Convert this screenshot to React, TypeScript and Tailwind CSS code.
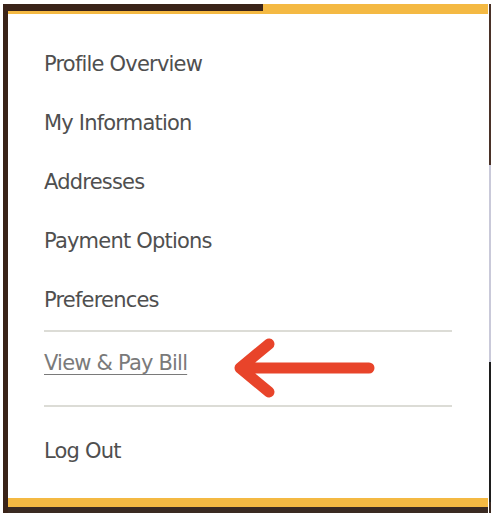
export default function App() {
  const items = ['Profile Overview', 'My Information', 'Addresses', 'Payment Options', 'Preferences'];

  const itemClass =
    "h-[59px] leading-[59px] text-[21px] tracking-[-0.8px] text-[#4f4f4f] font-['DejaVu_Sans',Verdana,sans-serif] whitespace-nowrap";

  return (
    <div className="w-[494px] h-[513px] bg-white overflow-hidden">
      <div className="flex h-[513px] pt-[4px] pl-[3px]">
        {/* left frame edge */}
        <div className="w-[5px] bg-[#3a2318]" />

        <div className="flex flex-col w-[480px]">
          {/* top progress bar */}
          <div className="relative h-[10px] bg-[#f4b943]">
            <div className="absolute left-[-5px] top-0 h-[7px] w-[260px] bg-[#3a2318]" />
          </div>

          <div className="h-[484px] bg-white px-[36px] pt-[21px]">
            {items.map((item) => (
              <div key={item} className={itemClass}>
                {item}
              </div>
            ))}
            <div className="h-[2px] bg-[#dcdcd6]" />
            <div className="relative h-[73px] pt-[2px]">
              <div className={itemClass}>
                <span className="text-[#7a7a7a] underline underline-offset-[4px] decoration-[1px]">
                  View &amp; Pay Bill
                </span>
              </div>
              <svg
                className="absolute left-[145px] top-[0px]"
                width="200"
                height="73"
                viewBox="189 332 200 73"
              >
                <path
                  d="M 269 344 L 240 368 L 269 392 M 240 368 L 369 368"
                  fill="none"
                  stroke="#e8442a"
                  strokeWidth="11"
                  strokeLinecap="round"
                  strokeLinejoin="round"
                />
              </svg>
            </div>
            <div className="h-[2px] bg-[#dcdcd6]" />
            <div className="pt-[15px]">
              <div className={itemClass}>Log Out</div>
            </div>
          </div>

          {/* bottom bar */}
          <div className="h-[9px] bg-[#f4b943]" />
          <div className="flex-1 bg-[#3a2a22]" />
        </div>

        <div className="w-[1px] bg-white" />
        {/* right edge / scrollbar */}
        <div className="flex flex-col w-[2px]">
          <div className="h-[161px] bg-[#4a3228]" />
          <div className="h-[197px] bg-[#c9c9d9]" />
          <div className="h-[140px] bg-[#1e1e1e]" />
          <div className="flex-1 bg-[#3a2a22]" />
        </div>
        <div className="flex-1 bg-white" />
      </div>
    </div>
  );
}
